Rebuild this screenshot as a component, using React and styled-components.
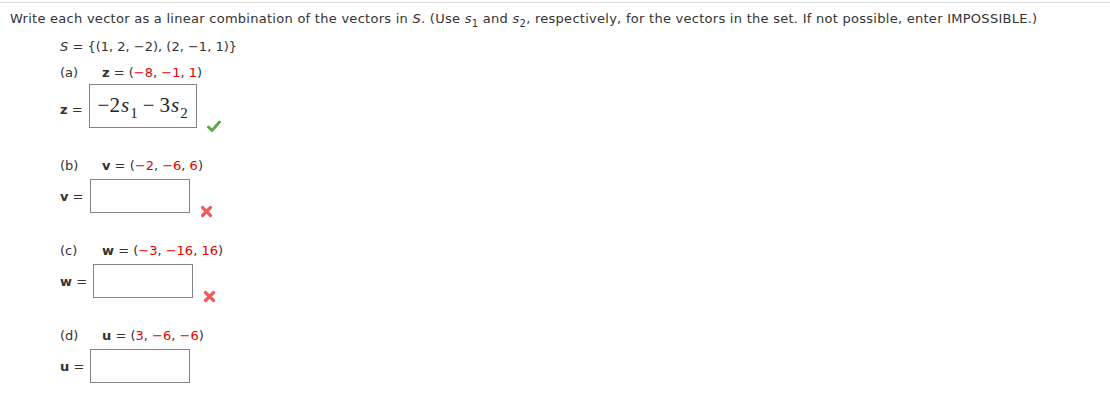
import React from 'react';
import styled, { createGlobalStyle } from 'styled-components';

const GlobalStyle = createGlobalStyle`
  html, body {
    margin: 0;
    background: #fff;
  }
  body {
    font-family: "DejaVu Sans", Verdana, sans-serif;
    font-size: 13px;
    color: #333;
  }
`;

const Page = styled.div`
  margin-top: 2px;
  border-top: 1px solid #dcdcdc;
  padding: 8px 0 0 10px;
  line-height: 16px;
`;

const Prompt = styled.p`
  margin: 0;
  letter-spacing: 0.27px;
`;

const Sub = styled.sub`
  font-size: 10px;
  vertical-align: -4px;
  line-height: 0;
`;

const Italic = styled.i`
  font-style: italic;
`;

const Indent = styled.div`
  margin-left: 50px;
`;

const SetLine = styled.div`
  margin-top: 12px;
`;

const Part = styled.section`
  margin-top: ${(p) => (p.$first ? '10px' : '30px')};
`;

const PartHeader = styled.div`
  display: flex;
`;

const PartLabel = styled.span`
  width: 42px;
`;

const Var = styled.b`
  font-weight: bold;
`;

const Num = styled.span`
  color: #e00000;
`;

const AnswerRow = styled.div`
  display: flex;
  align-items: center;
  margin-top: ${(p) => (p.$math ? '3px' : '5px')};
`;

const AnswerLabel = styled.span`
  margin-right: 6px;
  padding-top: ${(p) => (p.$math ? '8px' : '2px')};
`;

const AnswerBox = styled.div`
  box-sizing: border-box;
  border: 1px solid #858585;
  min-width: 100px;
  height: ${(p) => (p.$math ? '44px' : '34px')};
  padding: 0 8px;
  display: flex;
  align-items: center;
`;

const Math = styled.span`
  font-family: "Liberation Serif", "DejaVu Serif", serif;
  font-size: 21px;
  color: #222;
  white-space: nowrap;
  padding-bottom: 2px;
`;

const MathVar = styled.i`
  font-style: italic;
  margin-left: 1px;
`;

const MathSub = styled.sub`
  font-size: 15px;
  vertical-align: -6px;
  line-height: 0;
  margin-left: 1px;
`;

const Op = styled.span`
  margin: 0 5px;
`;

const Feedback = styled.span`
  align-self: flex-end;
  margin-left: 10px;
  width: 14px;
  height: 13px;
  transform: translateY(5px);
  display: flex;
`;

const Check = () => (
  <Feedback>
    <svg width="14" height="13" viewBox="0 0 14 13">
      <path d="M1.5 7 L5 10.5 L12.5 2" fill="none" stroke="#5aac4a" strokeWidth="3" strokeLinecap="round" strokeLinejoin="round" />
    </svg>
  </Feedback>
);

const Cross = () => (
  <Feedback>
    <svg width="13" height="13" viewBox="0 0 13 13">
      <path d="M2.5 2.5 L10.5 10.5 M10.5 2.5 L2.5 10.5" fill="none" stroke="#f25a5a" strokeWidth="3.2" strokeLinecap="round" />
    </svg>
  </Feedback>
);

const parts = [
  { key: 'a', name: 'z', values: ['−8', '−1', '1'], math: true, result: 'ok' },
  { key: 'b', name: 'v', values: ['−2', '−6', '6'], result: 'bad' },
  { key: 'c', name: 'w', values: ['−3', '−16', '16'], result: 'bad' },
  { key: 'd', name: 'u', values: ['3', '−6', '−6'] },
];

const Vector = ({ values }) => (
  <span>
    (
    {values.map((v, i) => (
      <React.Fragment key={i}>
        <Num>{v}</Num>
        {i < values.length - 1 ? ', ' : ''}
      </React.Fragment>
    ))}
    )
  </span>
);

export default function App() {
  return (
    <Page>
      <GlobalStyle />
      <Prompt>
        Write each vector as a linear combination of the vectors in <Italic>S</Italic>. (Use{' '}
        <Italic>s</Italic>
        <Sub>1</Sub> and <Italic>s</Italic>
        <Sub>2</Sub>, respectively, for the vectors in the set. If not possible, enter IMPOSSIBLE.)
      </Prompt>
      <Indent>
        <SetLine>
          <Italic>S</Italic> = {'{'}(1, 2, −2), (2, −1, 1){'}'}
        </SetLine>
        {parts.map((p, i) => (
          <Part key={p.key} $first={i === 0}>
            <PartHeader>
              <PartLabel>({p.key})</PartLabel>
              <span>
                <Var>{p.name}</Var> = <Vector values={p.values} />
              </span>
            </PartHeader>
            <AnswerRow $math={p.math}>
              <AnswerLabel $math={p.math}>
                <Var>{p.name}</Var> =
              </AnswerLabel>
              <AnswerBox $math={p.math}>
                {p.math && (
                  <Math>
                    −2<MathVar>s</MathVar>
                    <MathSub>1</MathSub>
                    <Op>−</Op>3<MathVar>s</MathVar>
                    <MathSub>2</MathSub>
                  </Math>
                )}
              </AnswerBox>
              {p.result === 'ok' && <Check />}
              {p.result === 'bad' && <Cross />}
            </AnswerRow>
          </Part>
        ))}
      </Indent>
    </Page>
  );
}
